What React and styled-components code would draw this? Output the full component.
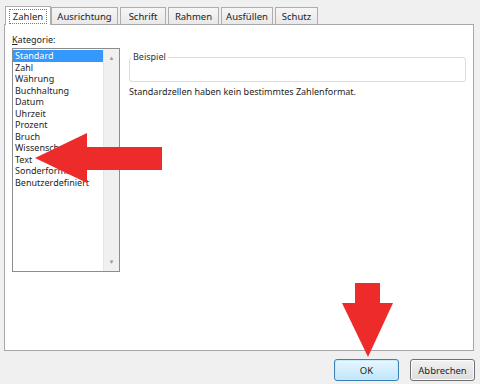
import styled, { createGlobalStyle } from 'styled-components';

const GlobalStyle = createGlobalStyle`
  html, body { margin: 0; padding: 0; background: #f0f0f0; }
  body { font-family: 'Noto Sans', 'Open Sans', sans-serif; font-size: 9px; color: #1e1e1e; }
`;

const Window = styled.div`
  position: relative;
  width: 480px;
  height: 384px;
  background: #f0f0f0;
  overflow: hidden;
  display: flex;
  flex-direction: column;
`;

const TabBar = styled.div`
  display: flex;
  align-items: flex-end;
  height: 24px;
  padding-left: 5px;
  box-sizing: border-box;
`;

const Tab = styled.div`
  position: relative;
  z-index: ${p => (p.active ? 2 : 1)};
  height: ${p => (p.active ? 19 : 17)}px;
  margin-bottom: ${p => (p.active ? -1 : 0)}px;
  margin-right: ${p => p.gap}px;
  width: ${p => p.w}px;
  box-sizing: border-box;
  border: 1px solid #adadad;
  border-bottom: none;
  background: ${p => (p.active ? '#ffffff' : 'linear-gradient(#f6f6f6, #e8e8e8)')};
  display: flex;
  align-items: center;
  justify-content: center;
  color: #222;
  font-size: 9.5px;
`;

const FocusLabel = styled.span`
  outline: 1px dotted #777;
  padding: 0 3px;
  line-height: 13px;
`;

const Panel = styled.div`
  height: 327px;
  margin: 0 6px 0 4px;
  box-sizing: border-box;
  background: #ffffff;
  border: 1px solid #a8a8a8;
  display: flex;
  padding: 9px 7px 0 7px;
  gap: 9px;
`;

const LeftColumn = styled.div`
  display: flex;
  flex-direction: column;
  width: 109px;
`;

const Label = styled.div`
  height: 14px;
  line-height: 12px;
  color: #222;
  u { text-decoration: underline; }
`;

const ListBox = styled.div`
  height: 224px;
  box-sizing: border-box;
  border: 1px solid #8c8c8c;
  display: flex;
  background: #fff;
`;

const Items = styled.div`
  flex: 1;
  padding: 1px 0 0 0;
`;

const Item = styled.div`
  height: 11.5px;
  line-height: 11.5px;
  padding-left: 2px;
  color: ${p => (p.selected ? '#ffffff' : '#1e1e1e')};
  background: ${p => (p.selected ? '#3399ff' : 'transparent')};
`;

const ScrollBar = styled.div`
  width: 15px;
  background: #f0f0f0;
  border-left: 1px solid #e6e6e6;
  display: flex;
  flex-direction: column;
  justify-content: space-between;
  align-items: center;
  padding: 5px 0 5px;
  color: #9a9a9a;
  font-size: 6px;
  line-height: 8px;
`;

const RightColumn = styled.div`
  flex: 1;
  display: flex;
  flex-direction: column;
  padding-top: 18px;
`;

const GroupBox = styled.fieldset`
  margin: 0;
  height: 30px;
  box-sizing: border-box;
  border: 1px solid #dcdcdc;
  border-radius: 3px;
  padding: 0;
  width: 337px;
  legend {
    padding: 0 2px;
    margin-left: 1px;
    color: #333;
    line-height: 10px;
  }
`;

const Description = styled.div`
  margin-top: 3px;
  color: #1e1e1e;
`;

const Footer = styled.div`
  flex: 1;
  display: flex;
  justify-content: flex-end;
  align-items: flex-start;
  padding: 8px 5px 0 0;
  gap: 11px;
`;

const Button = styled.button`
  width: ${p => p.w}px;
  height: 22px;
  box-sizing: border-box;
  font-family: inherit;
  font-size: 9.5px;
  color: #1e1e1e;
  border-radius: 3px;
  border: 1px solid ${p => (p.primary ? '#3c7fb1' : '#707070')};
  background: ${p => (p.primary ? 'linear-gradient(#eaf6fd, #bee6fd)' : 'linear-gradient(#f2f2f2, #dddddd)')};
  box-shadow: inset 0 0 0 1px ${p => (p.primary ? '#c8eafd' : '#fcfcfc')};
  padding: 0;
`;

const Overlay = styled.svg`
  position: absolute;
  left: 0;
  top: 0;
  pointer-events: none;
`;

const tabs = [
  { name: 'Zahlen', w: 46, gap: 0, active: true },
  { name: 'Ausrichtung', w: 67, gap: 2 },
  { name: 'Schrift', w: 46, gap: 2 },
  { name: 'Rahmen', w: 51, gap: 2 },
  { name: 'Ausfüllen', w: 52, gap: 2 },
  { name: 'Schutz', w: 43, gap: 0 },
];

const categories = [
  'Standard', 'Zahl', 'Währung', 'Buchhaltung', 'Datum', 'Uhrzeit', 'Prozent',
  'Bruch', 'Wissenschaft', 'Text', 'Sonderformat', 'Benutzerdefiniert',
];

export default function App() {
  return (
    <Window>
      <GlobalStyle />
      <TabBar>
        {tabs.map(t => (
          <Tab key={t.name} active={t.active} w={t.w} gap={t.gap}>
            {t.active ? <FocusLabel>{t.name}</FocusLabel> : t.name}
          </Tab>
        ))}
      </TabBar>
      <Panel>
        <LeftColumn>
          <Label><u>K</u>ategorie:</Label>
          <ListBox>
            <Items>
              {categories.map((c, i) => (
                <Item key={c} selected={i === 0}>{c}</Item>
              ))}
            </Items>
            <ScrollBar>
              <span>▲</span>
              <span>▼</span>
            </ScrollBar>
          </ListBox>
        </LeftColumn>
        <RightColumn>
          <GroupBox>
            <legend>Beispiel</legend>
          </GroupBox>
          <Description>Standardzellen haben kein bestimmtes Zahlenformat.</Description>
        </RightColumn>
      </Panel>
      <Footer>
        <Button primary w={65}>OK</Button>
        <Button w={65}>Abbrechen</Button>
      </Footer>
      <Overlay width="480" height="384">
        <polygon points="35,158 87,133 87,147 162,147 162,170 87,170 87,183" fill="#ee2b2b" />
        <polygon points="355,283 380,283 380,303 393,303 368,357 342,303 355,303" fill="#ee2b2b" />
      </Overlay>
    </Window>
  );
}
